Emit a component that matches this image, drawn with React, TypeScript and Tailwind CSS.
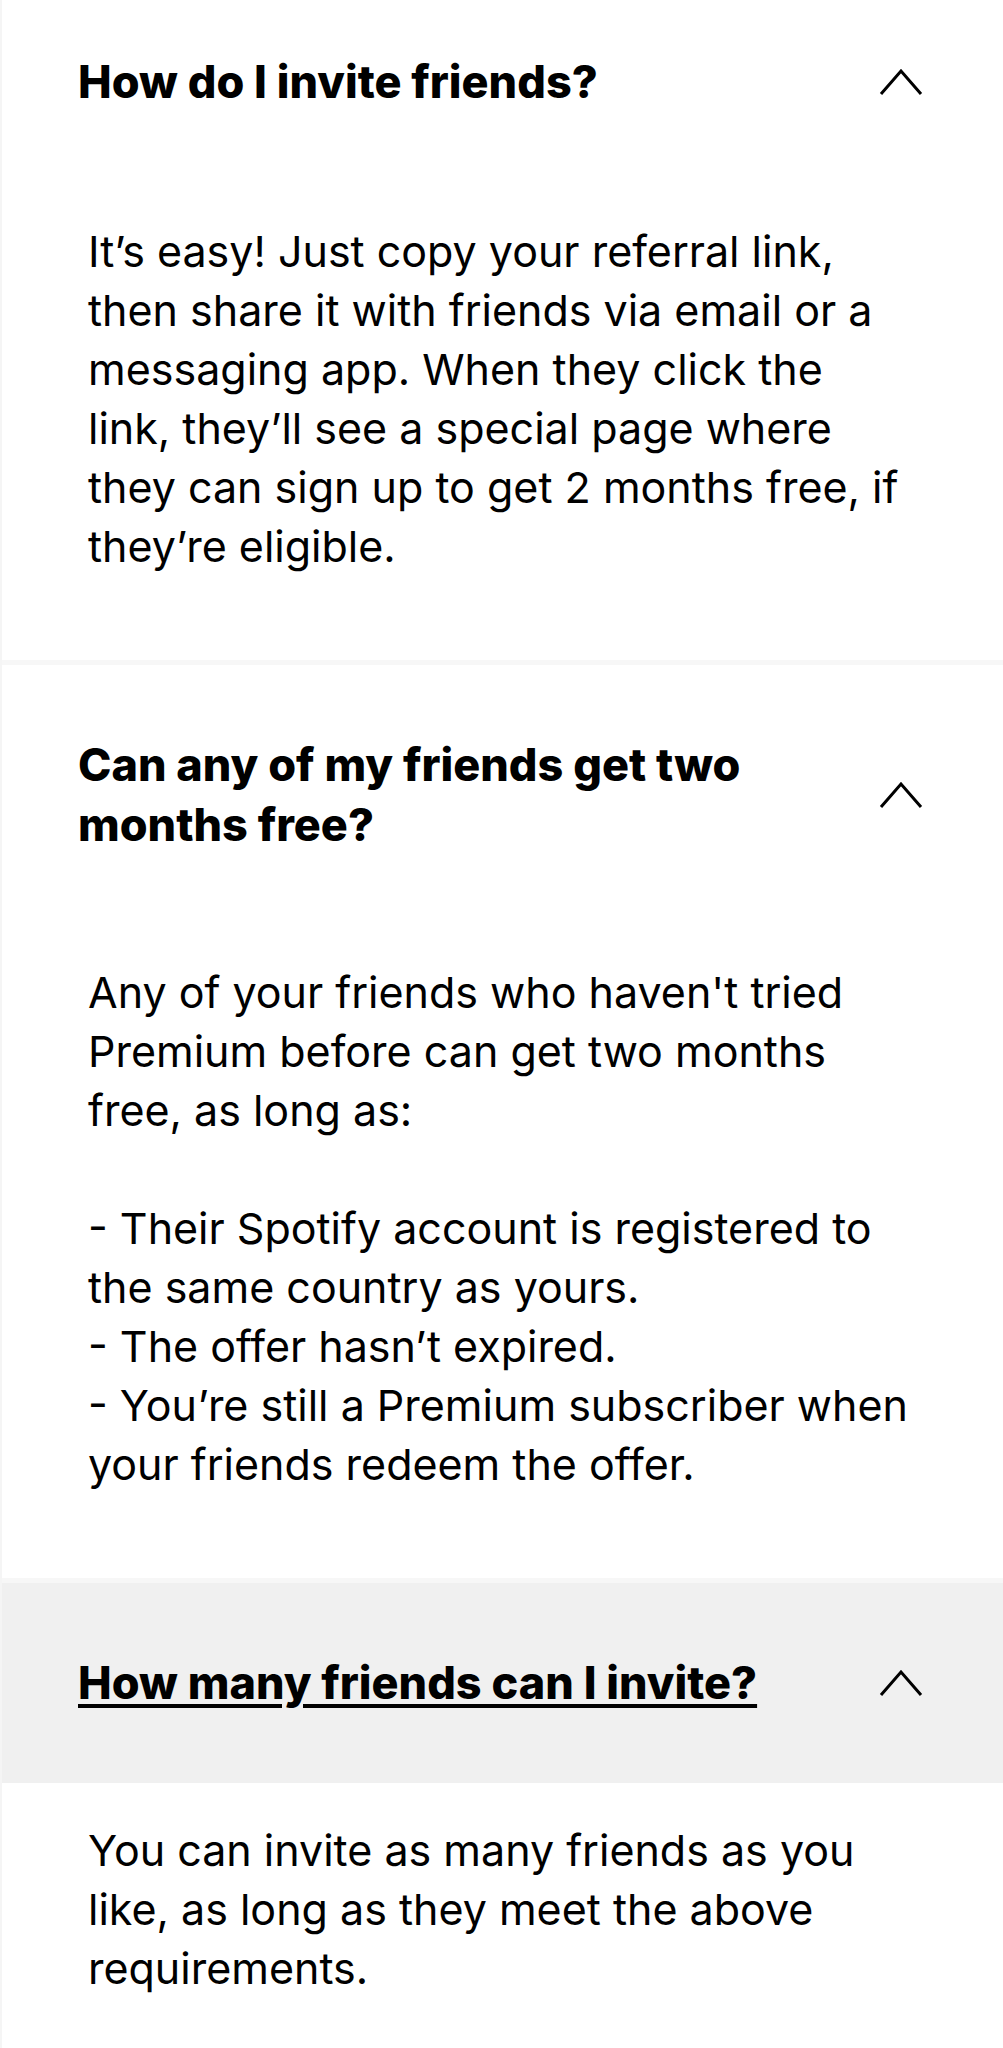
import React from "react";

interface Faq {
  question: string;
  answer: string[];
  hovered?: boolean;
}

const faqs: Faq[] = [
  {
    question: "How do I invite friends?",
    answer: [
      "It’s easy! Just copy your referral link, then share it with friends via email or a messaging app. When they click the link, they’ll see a special page where they can sign up to get 2 months free, if they’re eligible.",
    ],
  },
  {
    question: "Can any of my friends get two months free?",
    answer: [
      "Any of your friends who haven't tried Premium before can get two months free, as long as:",
      "",
      "- Their Spotify account is registered to the same country as yours.",
      "- The offer hasn’t expired.",
      "- You’re still a Premium subscriber when your friends redeem the offer.",
    ],
  },
  {
    question: "How many friends can I invite?",
    answer: [
      "You can invite as many friends as you like, as long as they meet the above requirements.",
    ],
    hovered: true,
  },
];

function Chevron() {
  return (
    <svg className="w-[44px] h-[28px] shrink-0" viewBox="0 0 44 28" fill="none">
      <polyline points="2,26 22,3 42,26" stroke="#000" strokeWidth={3} />
    </svg>
  );
}

export default function App() {
  return (
    <div
      className="min-h-screen bg-white border-l-2 border-[#f5f5f5] text-black"
      style={{ fontFamily: "Inter, 'Noto Sans', sans-serif" }}
    >
      {faqs.map((faq, i) => (
        <div key={i} className={i > 0 ? "border-t-[5px] border-[#f7f7f7]" : ""}>
          <button
            className={`w-full flex items-center justify-between gap-10 pl-[76px] pr-[80px] text-left ${
              i === 0 ? "pt-[52px] pb-[72px]" : "py-[70px]"
            } ${faq.hovered ? "bg-[#f0f0f0]" : ""}`}
          >
            <span
              className={`text-[45px] leading-[60px] font-extrabold max-w-[700px] ${
                faq.hovered ? "underline decoration-[4px] underline-offset-[5px]" : ""
              }`}
            >
              {faq.question}
            </span>
            <Chevron />
          </button>
          <div className="pl-[86px] pr-[92px] pt-[38px] pb-[84px] text-[43px] leading-[59px]">
            {faq.answer.map((line, j) =>
              line === "" ? <div key={j} className="h-[59px]" /> : <p key={j}>{line}</p>
            )}
          </div>
        </div>
      ))}
    </div>
  );
}
